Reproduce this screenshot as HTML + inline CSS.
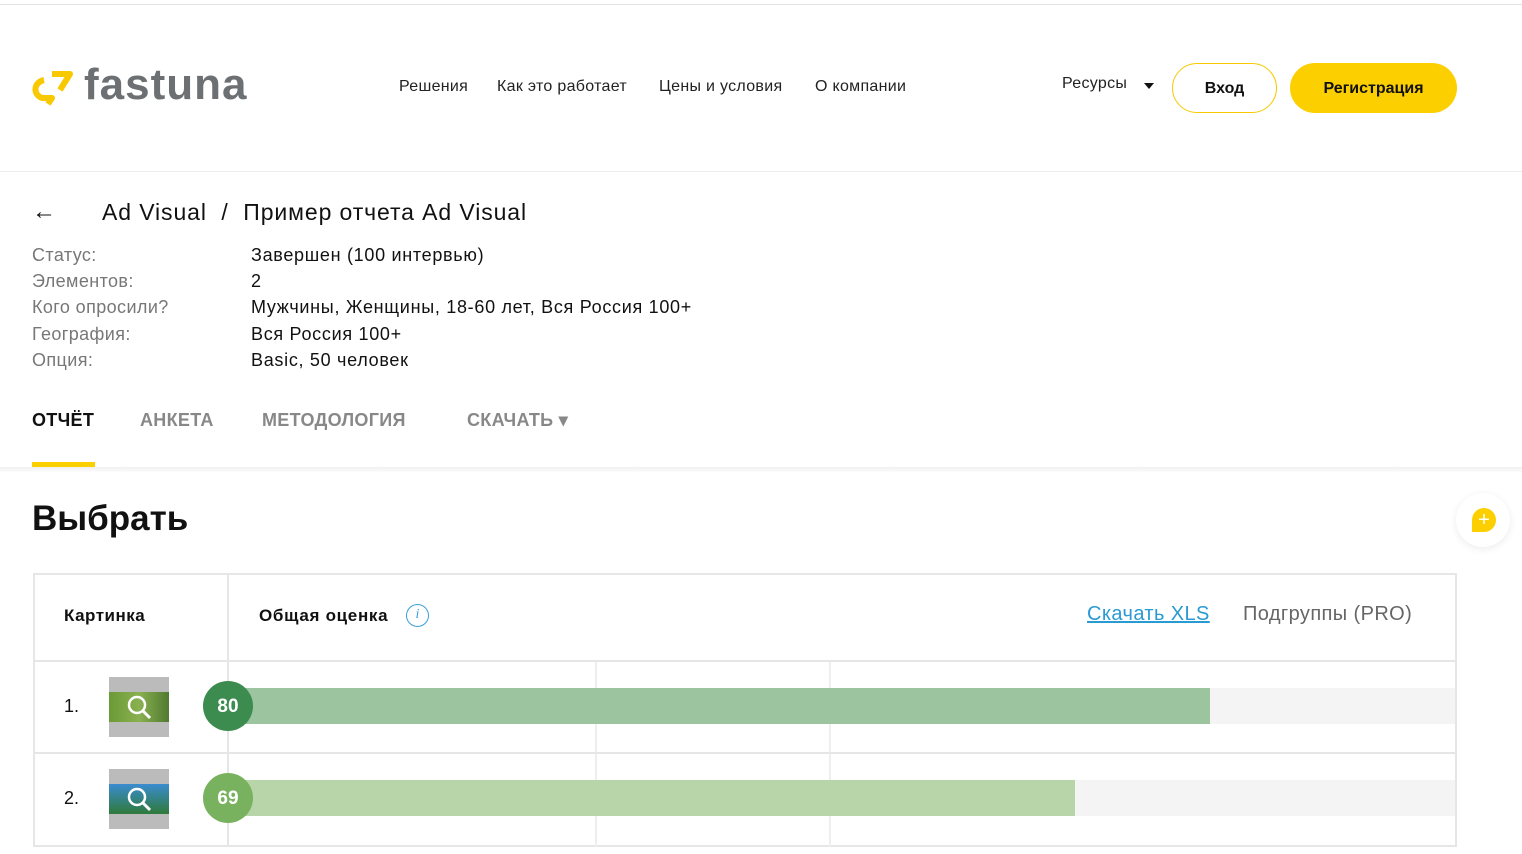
<!DOCTYPE html>
<html><head><meta charset="utf-8"><style>
*{margin:0;padding:0;box-sizing:border-box}
body{width:1522px;height:854px;overflow:hidden;background:#fff;font-family:"Liberation Sans",sans-serif;color:#111;position:relative}
.a{position:absolute;white-space:nowrap}
.nav{font-size:16px;color:#222;top:78px;letter-spacing:.3px}
.lbl{font-size:18px;color:#777;left:32px;letter-spacing:.4px}
.val{font-size:18px;color:#111;left:251px;letter-spacing:.7px}
.tab{font-size:18px;font-weight:bold;color:#888;top:410px;letter-spacing:.3px}
</style></head><body>
<div class="a" style="left:0;top:4px;width:1522px;height:1px;background:#e4e4e4"></div>
<svg class="a" style="left:30px;top:68px" width="46" height="40" viewBox="0 0 46 40"><path d="M22 6 L40 6 L30 22 M14 12 C4 14 2 26 12 30 L22 30 L18 36" fill="none" stroke="#f8c900" stroke-width="6" stroke-linejoin="round"/></svg>
<div class="a" style="left:84px;top:60px;font-size:44px;font-weight:bold;color:#6c7073;letter-spacing:1px">fastuna</div>
<div class="a nav" style="left:399px">Решения</div>
<div class="a nav" style="left:497px">Как это работает</div>
<div class="a nav" style="left:659px">Цены и условия</div>
<div class="a nav" style="left:815px">О компании</div>
<div class="a nav" style="left:1062px;top:75px">Ресурсы</div>
<div class="a" style="left:1144px;top:83px;border:5px solid transparent;border-top:6px solid #111"></div>
<div class="a" style="left:1172px;top:63px;width:105px;height:50px;border:1px solid #f8c900;border-radius:25px;text-align:center;line-height:50px;font-weight:bold;font-size:16px">Вход</div>
<div class="a" style="left:1290px;top:63px;width:167px;height:50px;background:#fccf00;border-radius:25px;text-align:center;line-height:52px;font-weight:bold;font-size:16px">Регистрация</div>
<div class="a" style="left:0;top:171px;width:1522px;height:1px;background:#eee"></div>
<div class="a" style="left:32px;top:198px;font-size:24px">←</div>
<div class="a" style="left:102px;top:199px;font-size:23px;letter-spacing:.9px">Ad Visual&nbsp; /&nbsp; Пример отчета Ad Visual</div>
<div class="a lbl" style="top:245px">Статус:</div><div class="a val" style="top:245px">Завершен (100 интервью)</div>
<div class="a lbl" style="top:271px">Элементов:</div><div class="a val" style="top:271px">2</div>
<div class="a lbl" style="top:297px">Кого опросили?</div><div class="a val" style="top:297px">Мужчины, Женщины, 18-60 лет, Вся Россия 100+</div>
<div class="a lbl" style="top:324px">География:</div><div class="a val" style="top:324px">Вся Россия 100+</div>
<div class="a lbl" style="top:350px">Опция:</div><div class="a val" style="top:350px">Basic, 50 человек</div>
<div class="a tab" style="left:32px;color:#111">ОТЧЁТ</div>
<div class="a tab" style="left:140px">АНКЕТА</div>
<div class="a tab" style="left:262px">МЕТОДОЛОГИЯ</div>
<div class="a tab" style="left:467px">СКАЧАТЬ ▾</div>
<div class="a" style="left:32px;top:462px;width:63px;height:5px;background:#fccf00"></div>
<div class="a" style="left:0;top:467px;width:1522px;height:6px;background:linear-gradient(#f0f0f0,#fff)"></div>
<div class="a" style="left:32px;top:499px;font-size:35px;font-weight:bold">Выбрать</div>
<div class="a" style="left:1456px;top:493px;width:54px;height:54px;border-radius:50%;background:#fff;box-shadow:0 2px 8px rgba(0,0,0,.08)"></div>
<div class="a" style="left:1472px;top:508px;width:24px;height:24px;border-radius:12px 12px 12px 0;background:#fccf00;color:#fff;text-align:center;line-height:24px;font-size:20px">+</div>
<div class="a" style="left:33px;top:573px;width:1424px;height:274px;border:2px solid #e6e6e6"></div>
<div class="a" style="left:227px;top:573px;width:2px;height:274px;background:#e6e6e6"></div>
<div class="a" style="left:595px;top:661px;width:2px;height:186px;background:#eee"></div>
<div class="a" style="left:829px;top:661px;width:2px;height:186px;background:#eee"></div>
<div class="a" style="left:33px;top:660px;width:1424px;height:2px;background:#e6e6e6"></div>
<div class="a" style="left:33px;top:752px;width:1424px;height:2px;background:#e6e6e6"></div>
<div class="a" style="left:64px;top:606px;font-size:17px;font-weight:bold;letter-spacing:.5px">Картинка</div>
<div class="a" style="left:259px;top:606px;font-size:17px;font-weight:bold;letter-spacing:.7px">Общая оценка</div>
<div class="a" style="left:406px;top:604px;width:23px;height:23px;border:1.5px solid #3aa0d8;border-radius:50%;color:#3aa0d8;font-size:14px;font-style:italic;text-align:center;line-height:20px;font-family:'Liberation Serif',serif">i</div>
<div class="a" style="left:1087px;top:603px;font-size:20px;color:#2a9ad3;text-decoration:underline;letter-spacing:.4px">Скачать XLS</div>
<div class="a" style="left:1243px;top:603px;font-size:20px;color:#666;letter-spacing:.4px">Подгруппы (PRO)</div>
<div class="a" style="left:64px;top:696px;font-size:18px">1.</div>
<div class="a" style="left:64px;top:788px;font-size:18px">2.</div>
<div class="a" style="left:109px;top:677px;width:60px;height:60px;background:#bbb"></div>
<div class="a" style="left:109px;top:692px;width:60px;height:30px;background:linear-gradient(90deg,#6a9a35,#8ab050,#4f7a30)"></div>
<div class="a" style="left:109px;top:769px;width:60px;height:60px;background:#bbb"></div>
<div class="a" style="left:109px;top:784px;width:60px;height:30px;background:linear-gradient(#3a8cd0,#2f7a3a)"></div>
<svg class="a" style="left:125px;top:693px" width="30" height="30"><circle cx="12" cy="12" r="8" fill="none" stroke="#fff" stroke-width="2.5"/><path d="M18 18l7 7" stroke="#fff" stroke-width="3"/></svg>
<svg class="a" style="left:125px;top:785px" width="30" height="30"><circle cx="12" cy="12" r="8" fill="none" stroke="#fff" stroke-width="2.5"/><path d="M18 18l7 7" stroke="#fff" stroke-width="3"/></svg>
<div class="a" style="left:229px;top:688px;width:1226px;height:36px;background:#f4f4f4"></div>
<div class="a" style="left:229px;top:688px;width:981px;height:36px;background:#9bc49f"></div>
<div class="a" style="left:229px;top:780px;width:1226px;height:36px;background:#f4f4f4"></div>
<div class="a" style="left:229px;top:780px;width:846px;height:36px;background:#b7d5a8"></div>
<div class="a" style="left:203px;top:681px;width:50px;height:50px;border-radius:50%;background:#3d8c4f;color:#fff;font-weight:bold;font-size:19px;text-align:center;line-height:52px">80</div>
<div class="a" style="left:203px;top:773px;width:50px;height:50px;border-radius:50%;background:#79b25e;color:#fff;font-weight:bold;font-size:19px;text-align:center;line-height:52px">69</div>
</body></html>
